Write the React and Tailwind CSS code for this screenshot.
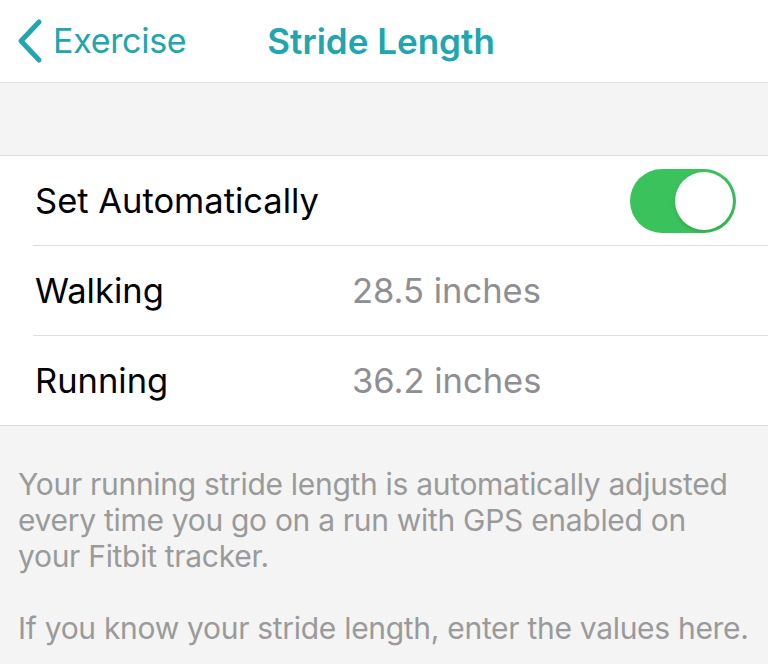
const rows = [
  { label: 'Walking', value: '28.5 inches' },
  { label: 'Running', value: '36.2 inches' },
];

function BackChevron() {
  return (
    <svg width="28" height="46" viewBox="0 0 28 46" fill="none" className="shrink-0">
      <polyline points="23,4 5,23 23,42" stroke="currentColor" strokeWidth="5" strokeLinecap="round" strokeLinejoin="round" />
    </svg>
  );
}

function Toggle({ on = true }) {
  return (
    <div className={`flex h-[64px] w-[106px] items-center rounded-full p-[3px] ${on ? 'justify-end bg-[#3ac35c]' : 'justify-start bg-[#e5e5ea]'}`}>
      <div className="h-[58px] w-[58px] rounded-full bg-white shadow-[0_2px_4px_rgba(0,0,0,0.15)]" />
    </div>
  );
}

export default function App() {
  return (
    <div className="h-[664px] w-[768px] overflow-hidden bg-[#f4f4f4] font-['Inter',sans-serif]">
      <header className="flex h-[83px] items-center border-b border-[#e2e2e2] bg-white">
        <button className="flex items-center pl-[16px] text-[#21a5ae]">
          <BackChevron />
          <span className="ml-[9px] text-[34px] leading-none tracking-[-0.3px]">Exercise</span>
        </button>
        <h1 className="ml-[81px] text-[35px] font-semibold leading-none text-[#21a5ae]">Stride Length</h1>
      </header>

      <div className="h-[72px]" />

      <section className="border-y border-[#dcdcdc] bg-white">
        <div className="flex h-[89px] items-center justify-between pl-[35px] pr-[32px]">
          <span className="text-[34.5px] text-black">Set Automatically</span>
          <Toggle on />
        </div>
        {rows.map((r) => (
          <div key={r.label} className="ml-[33px] flex h-[90px] items-center border-t border-[#dedede]">
            <span className="w-[319px] pl-[2px] text-[34.5px] text-black">{r.label}</span>
            <span className="text-[34.5px] text-[#8e8e93]">{r.value}</span>
          </div>
        ))}
      </section>

      <div className="whitespace-nowrap px-[18px] pt-[40px] text-[30px] leading-[36px] tracking-[-0.3px] text-[#9a9a9a]">
        <p>
          Your running stride length is automatically adjusted
          <br />
          every time you go on a run with GPS enabled on
          <br />
          your Fitbit tracker.
        </p>
        <p className="mt-[36px]">If you know your stride length, enter the values here.</p>
      </div>
    </div>
  );
}
